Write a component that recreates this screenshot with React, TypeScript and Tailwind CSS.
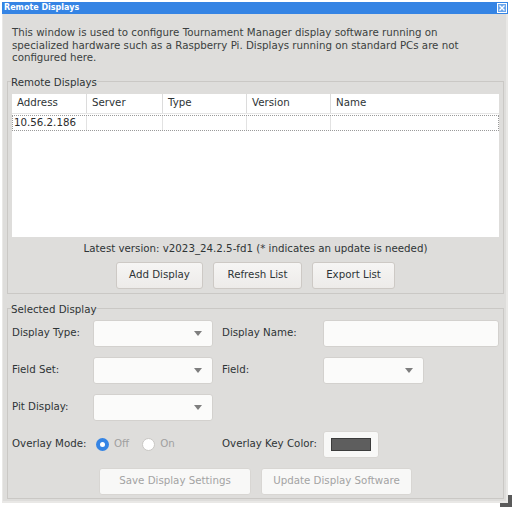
import React from "react";

function Combo({ w }: { w: string }) {
  return (
    <div className={`${w} h-[27px] bg-[#fbfbfa] border border-[#d3d1ce] rounded-[3px] flex items-center justify-end pr-[10px]`}>
      <svg width="8" height="5" viewBox="0 0 8 5">
        <polygon points="0,0 8,0 4,5" fill="#7e7e7e" />
      </svg>
    </div>
  );
}

function Btn({ label, w, disabled }: { label: string; w: string; disabled?: boolean }) {
  return (
    <div
      className={`${w} h-[27px] rounded-[3px] border flex items-center justify-center whitespace-nowrap ${
        disabled
          ? "bg-[#f8f8f7] border-[#d8d6d3] text-[#a3a3a3]"
          : "bg-gradient-to-b from-[#f6f5f4] to-[#edebe9] border-[#cdc9c5] text-[#2e3436]"
      }`}
    >
      {label}
    </div>
  );
}

export default function App() {
  return (
    <div className="relative w-[512px] h-[507px] bg-white font-['DejaVu_Sans',sans-serif] text-[10.25px] text-[#2e3436] overflow-hidden">
      <div className="ml-[2px] pt-[2px] w-[506px] flex flex-col">
        {/* title bar */}
        <div className="h-[12px] bg-[#3584e4] flex items-center justify-between pl-[2px] pr-[1px]">
          <span className="text-white text-[8px] font-bold leading-[12px]">Remote Displays</span>
          <svg width="10" height="10" viewBox="0 0 10 10">
            <rect x="0.5" y="0.5" width="9" height="9" fill="#6aa5ec" stroke="#ffffff" strokeWidth="1" />
            <path d="M2.5 2.5 L7.5 7.5 M7.5 2.5 L2.5 7.5" stroke="#ffffff" strokeWidth="1.4" />
          </svg>
        </div>
        {/* body */}
        <div className="h-[489px] bg-[#dedddb] border-l border-r-[2px] border-b-[2px] border-[#e9e8e6] pl-[4px] pr-[2px] flex flex-col">
          <p className="pt-[12px] pl-[5px] pr-[40px] leading-[12.5px] text-[#3b3f40]">
            This window is used to configure Tournament Manager display software running on specialized hardware such
            as a Raspberry Pi. Displays running on standard PCs are not configured here.
          </p>

          <fieldset className="mt-[12px] border border-[#cac8c5] px-[4px] pt-[6px] pb-[4px] min-w-0">
            <legend className="ml-[-1px] px-0 leading-[12px] text-[#2e3436]">Remote Displays</legend>
            <div className="h-[143px] bg-white flex flex-col">
              <div className="h-[20px] flex items-center border-b border-[#e6e6e6]">
                <div className="w-[75px] h-full flex items-center pl-[5px] border-r border-[#dcdcdc]">Address</div>
                <div className="w-[76px] h-full flex items-center pl-[5px] border-r border-[#dcdcdc]">Server</div>
                <div className="w-[84px] h-full flex items-center pl-[5px] border-r border-[#dcdcdc]">Type</div>
                <div className="w-[84px] h-full flex items-center pl-[5px] border-r border-[#dcdcdc]">Version</div>
                <div className="flex-1 h-full flex items-center pl-[5px]">Name</div>
              </div>
              <div className="mt-[1px] h-[16px] flex border border-dotted border-[#9a9a9a]">
                <div className="w-[74px] h-full flex items-center pl-[1px] border-r border-[#e2e2e2] text-[#2b2b2b]">10.56.2.186</div>
                <div className="w-[76px] h-full border-r border-[#e2e2e2]" />
                <div className="w-[84px] h-full border-r border-[#e2e2e2]" />
                <div className="w-[84px] h-full border-r border-[#e2e2e2]" />
                <div className="flex-1 h-full" />
              </div>
            </div>
            <div className="mt-[5px] leading-[12px] text-center">
              Latest version: v2023_24.2.5-fd1 (* indicates an update is needed)
            </div>
            <div className="mt-[8px] flex justify-center gap-[10px]">
              <Btn label="Add Display" w="w-[87px]" />
              <Btn label="Refresh List" w="w-[89px]" />
              <Btn label="Export List" w="w-[83px]" />
            </div>
          </fieldset>

          <fieldset className="mt-[9px] border border-[#cac8c5] px-[4px] pt-[5px] pb-[3px] min-w-0">
            <legend className="ml-[-1px] px-0 leading-[12px] text-[#2e3436]">Selected Display</legend>
            <div className="grid grid-cols-[81px_120px_101px_1fr] gap-y-[10px] items-center">
              <div className="whitespace-nowrap">Display Type:</div>
              <Combo w="w-[120px]" />
              <div className="pl-[9px] whitespace-nowrap">Display Name:</div>
              <div className="h-[27px] ml-[9px] bg-[#fbfbfa] border border-[#d3d1ce] rounded-[3px]" />

              <div className="whitespace-nowrap">Field Set:</div>
              <Combo w="w-[120px]" />
              <div className="pl-[9px] whitespace-nowrap">Field:</div>
              <div className="ml-[9px]">
                <Combo w="w-[101px]" />
              </div>

              <div className="whitespace-nowrap">Pit Display:</div>
              <Combo w="w-[120px]" />
              <div />
              <div />

              <div className="whitespace-nowrap">Overlay Mode:</div>
              <div className="h-[27px] flex items-center pl-[3px] text-[#a0a0a0]">
                <span className="w-[13px] h-[13px] rounded-full bg-[#3584e4] flex items-center justify-center">
                  <span className="w-[5px] h-[5px] rounded-full bg-white" />
                </span>
                <span className="ml-[5px]">Off</span>
                <span className="ml-[13px] w-[13px] h-[13px] rounded-full bg-white border border-[#c9c7c4]" />
                <span className="ml-[5px]">On</span>
              </div>
              <div className="pl-[9px] whitespace-nowrap">Overlay Key Color:</div>
              <div className="ml-[9px]">
                <div className="w-[56px] h-[27px] bg-[#f8f8f7] border border-[#d8d6d3] rounded-[3px] flex items-center justify-center">
                  <div className="w-[40px] h-[13px] bg-[#5e5e5e] border border-[#3c3c3c]" />
                </div>
              </div>
            </div>
            <div className="mt-[10px] flex justify-center gap-[10px]">
              <Btn label="Save Display Settings" w="w-[152px]" disabled />
              <Btn label="Update Display Software" w="w-[151px]" disabled />
            </div>
          </fieldset>
        </div>
      </div>
      <div className="absolute right-0 bottom-0 w-[4px] h-[12px] bg-[#5a5a5a]" />
      <div className="absolute right-0 bottom-0 w-[12px] h-[4px] bg-[#5a5a5a]" />
    </div>
  );
}
